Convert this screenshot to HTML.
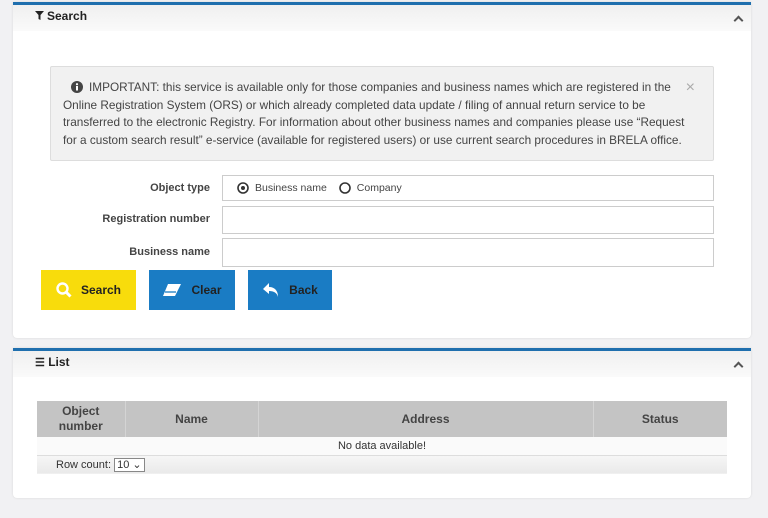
<!DOCTYPE html>
<html><head><meta charset="utf-8"><style>
*{box-sizing:border-box;margin:0;padding:0}
body{width:768px;height:518px;background:#f1f1f3;font-family:"Liberation Sans",Arial,sans-serif;position:relative;overflow:hidden;color:#333}
.panel{position:absolute;left:13px;width:738px;background:#fff;border-top:3px solid #1f6fae;border-radius:0 0 4px 4px;box-shadow:0 0 2px #d8d8d8}
.hdr{height:26px;background:linear-gradient(#f0f0f0,#fafafa);position:relative;font-size:12px;font-weight:bold;color:#222;padding:4px 0 0 22px}
.chev{position:absolute;right:9px;top:12px;width:7px;height:7px;border-left:2px solid #555;border-top:2px solid #555;transform:rotate(45deg)}
.alert{position:absolute;left:37px;top:61px;width:664px;height:95px;background:#f1f1f1;border:1px solid #ddd;border-radius:2px;font-size:11.8px;line-height:17.5px;color:#444;padding:12px 12px 0 12px}
.x{position:absolute;right:18px;top:12px;color:#aaa;font-size:16px}
.lbl{position:absolute;right:541px;font-size:11px;font-weight:bold;color:#444}
.inp{position:absolute;left:209px;width:492px;border:1px solid #ccc;background:#fff}
.btn{position:absolute;top:265px;height:40px;font-size:12px;font-weight:bold;color:#222;display:flex;align-items:center;justify-content:center;gap:9px}
th{background:#c4c4c4;font-size:12px;color:#444;font-weight:bold;border-right:1px solid #d4d4d4;height:36px}
</style></head><body>
<div class="panel" style="top:2px;height:336px">
 <div class="hdr"><svg width="9" height="9" viewBox="0 0 9 9" style="margin-right:3px"><path d="M0 0H9L5.5 4V9L3.5 8V4Z" fill="#222"/></svg>Search<div class="chev"></div></div>
 <div class="alert"><svg width="12" height="12" viewBox="0 0 12 12" style="vertical-align:-2px;margin:0 6px 0 8px"><circle cx="6" cy="6" r="6" fill="#444"/><rect x="5" y="5" width="2" height="4.5" fill="#fff"/><circle cx="6" cy="3.2" r="1.1" fill="#fff"/></svg>IMPORTANT: this service is available only for those companies and business names which are registered in the <span style="display:inline-block;width:20px"></span>Online Registration System (ORS) or which already completed data update / filing of annual return service to be transferred to the electronic Registry. For information about other business names and companies please use “Request for a custom search result” e-service (available for registered users) or use current search procedures in BRELA office.<span class="x">×</span></div>
 <div class="lbl" style="top:177px">Object type</div>
 <div class="inp" style="top:170px;height:26px;font-size:10.5px;color:#444;padding-left:14px;display:flex;align-items:center;gap:6px">
  <svg width="12" height="12"><circle cx="6" cy="6" r="5" fill="none" stroke="#333" stroke-width="1.6"/><circle cx="6" cy="6" r="2" fill="#333"/></svg>Business name
  <svg width="12" height="12" style="margin-left:6px"><circle cx="6" cy="6" r="5" fill="none" stroke="#333" stroke-width="1.6"/></svg>Company</div>
 <div class="lbl" style="top:208px">Registration number</div>
 <div class="inp" style="top:201px;height:28px"></div>
 <div class="lbl" style="top:241px">Business name</div>
 <div class="inp" style="top:233px;height:29px"></div>
 <div class="btn" style="left:28px;width:95px;background:#f8dc0c"><svg width="16" height="16"><circle cx="6.5" cy="6.5" r="5" fill="none" stroke="#fff" stroke-width="2.4"/><line x1="10" y1="10" x2="14.5" y2="14.5" stroke="#fff" stroke-width="3"/></svg>Search</div>
 <div class="btn" style="left:136px;width:86px;background:#1a7cc4"><svg width="20" height="14"><path d="M6 1H19L13 13H1Z" fill="#fff"/><path d="M3 9H14" stroke="#1a7cc4" stroke-width="1.3"/></svg>Clear</div>
 <div class="btn" style="left:235px;width:84px;background:#1a7cc4"><svg width="18" height="16"><path d="M7 1L1 7L7 12V9C12 9 15 11 16 15C16 9 13 5 7 5Z" fill="#fff"/></svg>Back</div>
</div>
<div class="panel" style="top:348px;height:150px">
 <div class="hdr"><span style="font-size:11px">&#9776;</span> List<div class="chev"></div></div>
 <table style="position:absolute;left:24px;top:50px;width:690px;border-collapse:collapse">
  <tr><th style="width:88px;line-height:15px">Object<br>number</th><th style="width:133px">Name</th><th style="width:335px">Address</th><th style="border:0">Status</th></tr>
  <tr><td colspan="4" style="height:18px;text-align:center;font-size:11px;background:#fafafa;border-bottom:1px solid #ddd">No data available!</td></tr>
  <tr><td colspan="4" style="height:19px;font-size:11px;background:linear-gradient(#f6f6f6,#e9e9e9);padding-left:19px">Row count: <span style="border:1px solid #888;background:#fff;padding:0 2px;font-size:11px">10 &#8964;</span></td></tr>
 </table>
</div>
</body></html>
